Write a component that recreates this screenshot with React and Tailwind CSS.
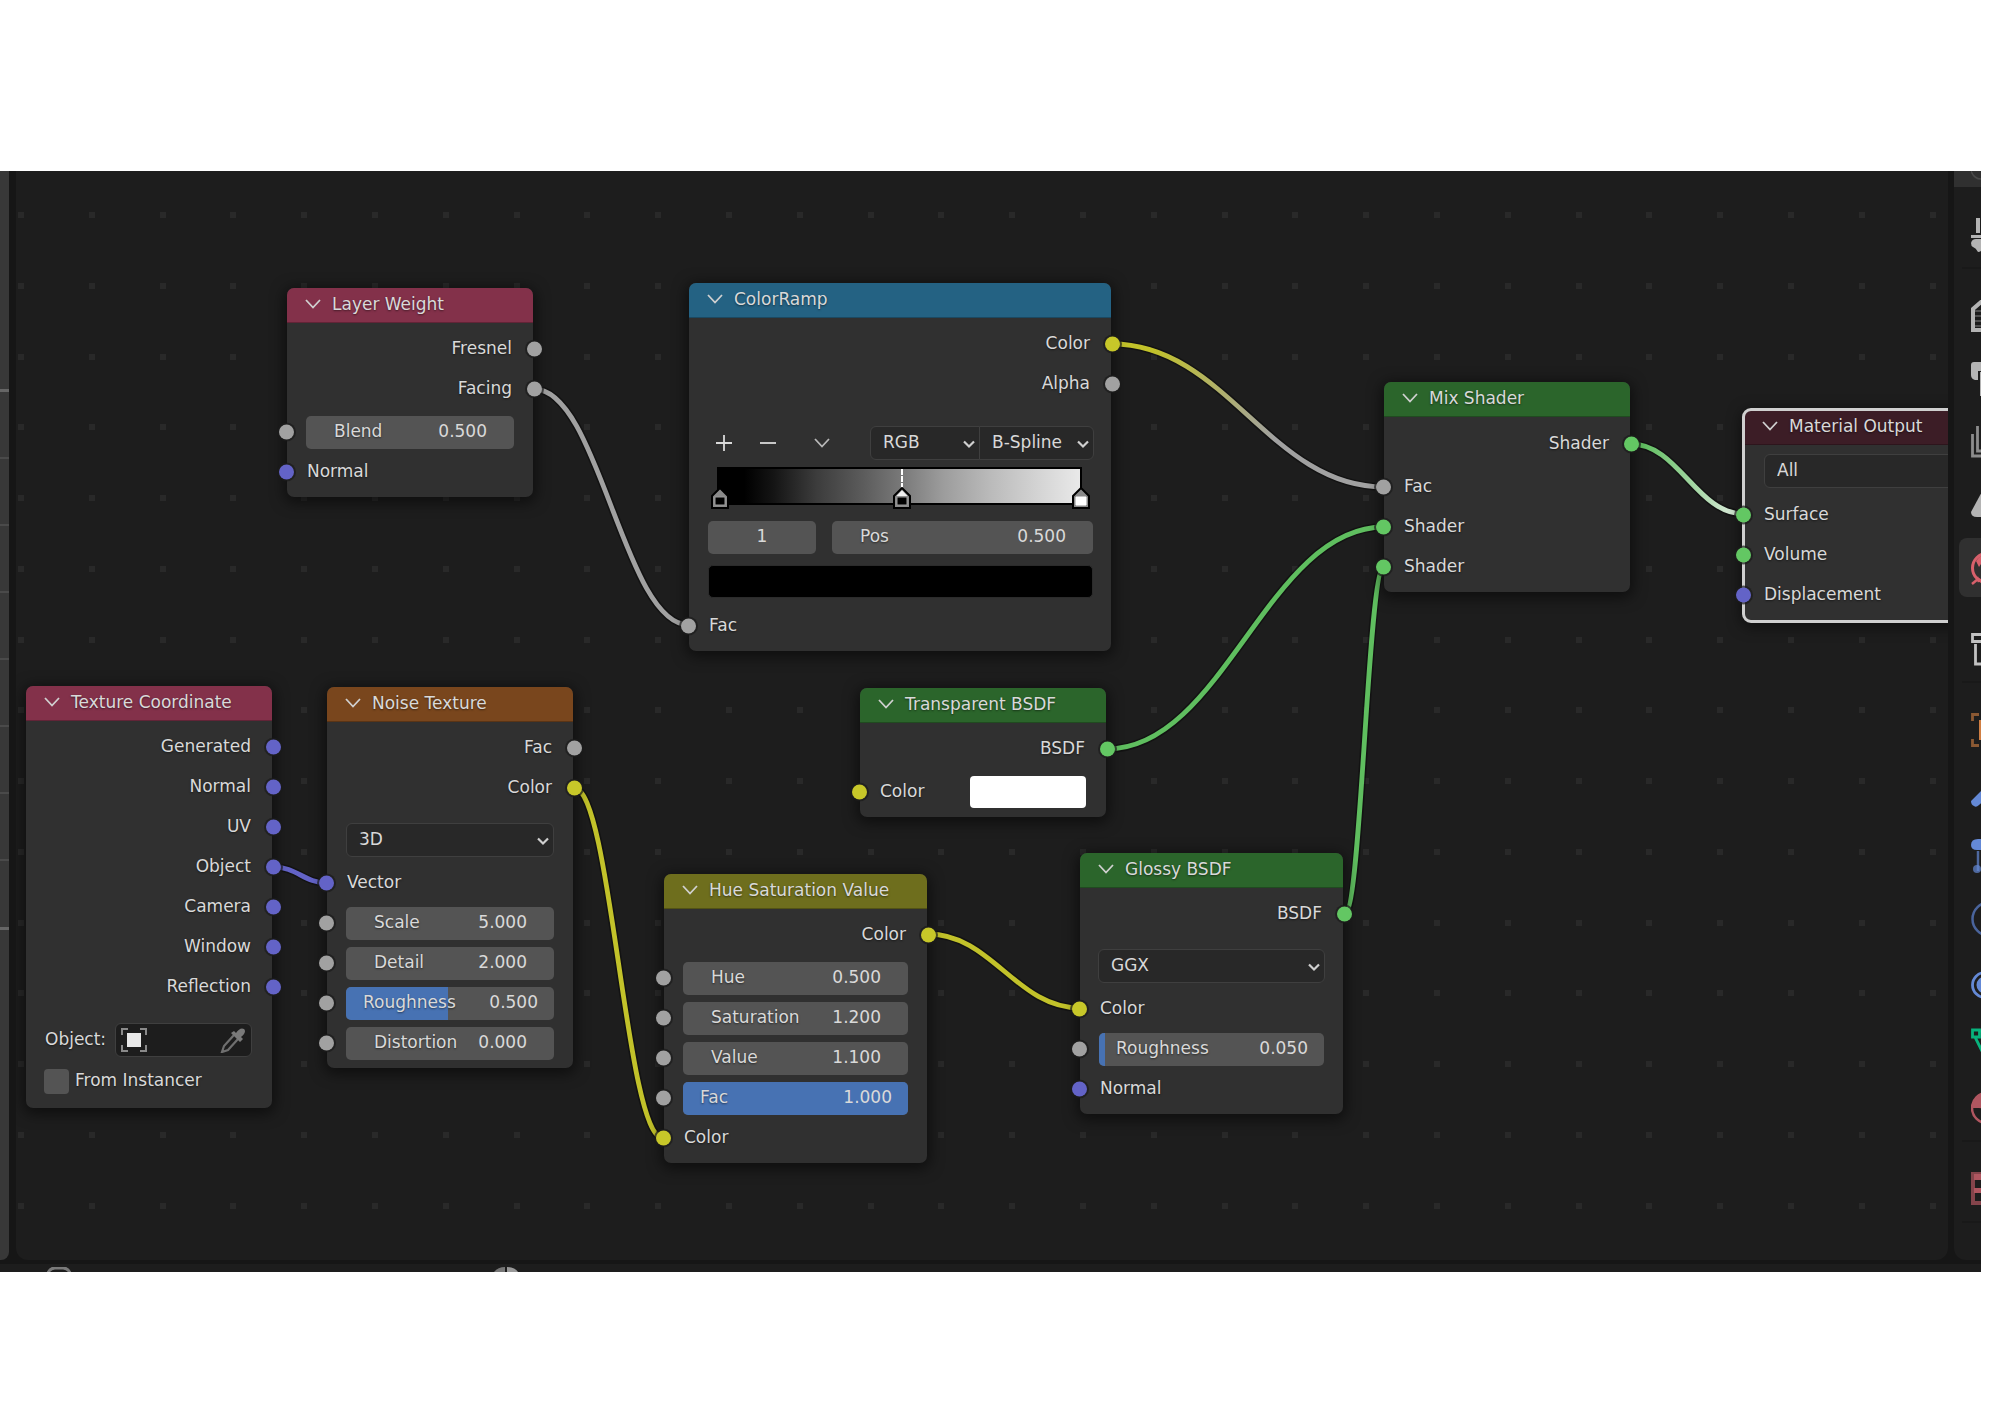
import React from "react";

const SOCKET_COLORS = {
  gray: "bg-[#a1a1a1]",
  yellow: "bg-[#c7c729]",
  green: "bg-[#63c763]",
  purple: "bg-[#6363c7]",
};

function Chevron({ className = "" }) {
  return (
    <svg viewBox="0 0 16 10" className={`h-[10px] w-4 ${className}`} fill="none" stroke="currentColor" strokeWidth="1.8">
      <path d="M1 1l7 7.500l7-7.500" />
    </svg>
  );
}

function SmallChevron({ className = "" }) {
  return (
    <svg
      viewBox="0 0 12 9"
      className={`pointer-events-none absolute top-[14px] h-[9px] w-3 text-[#d0d0d0] ${className}`}
      fill="none"
      stroke="currentColor"
      strokeWidth="2.2"
    >
      <path d="M1 1.500l5 5l5-5" />
    </svg>
  );
}

function Socket({ color, side }) {
  return (
    <span
      className={`absolute top-1/2 size-[15px] -translate-y-1/2 rounded-full ring-2 ring-[#1b1b1b]/70 ${SOCKET_COLORS[color]} ${
        side === "out" ? "-right-[9px]" : "-left-2"
      }`}
    />
  );
}

function Node({ title, header, place, selected = false, children }) {
  return (
    <section
      className={`absolute rounded-[7px] bg-[#303030] shadow-[0_3px_14px_3px_rgba(0,0,0,0.5)] ${place} ${
        selected ? "outline-[3px] -outline-offset-1 outline-[#cfcfcf]" : ""
      }`}
    >
      <header className={`flex h-[35px] items-center gap-[11px] rounded-t-[7px] border-b border-black/25 pb-[3px] pl-[18px] ${header}`}>
        <button type="button" aria-label={`Collapse ${title}`} className="text-[#d0d0d0]">
          <Chevron />
        </button>
        <h2 className="whitespace-nowrap">{title}</h2>
      </header>
      {children}
    </section>
  );
}

function Output({ label, color }) {
  return (
    <div className="relative flex h-10 items-center justify-end pr-[21px] pb-[3px]">
      <span>{label}</span>
      <Socket color={color} side="out" />
    </div>
  );
}

function Input({ label, color, children }) {
  return (
    <div className="relative flex h-10 items-center justify-between pr-5 pb-0.5 pl-5">
      <span>{label}</span>
      {children}
      <Socket color={color} side="in" />
    </div>
  );
}

function NumberField({ label, value, slider, fill = "", className = "" }) {
  return (
    <label
      className={`relative flex h-[33px] items-center overflow-hidden rounded-[5px] bg-[#545454] pb-[3px] ${
        slider ? "pr-4 pl-[17px]" : "pr-[27px] pl-7"
      } ${className}`}
    >
      {slider && <span className={`absolute inset-y-0 left-0 bg-[#4772b3] ${fill}`} />}
      <span className="relative">{label}</span>
      <input defaultValue={value} className="relative w-0 min-w-0 flex-1 bg-transparent text-right outline-none" />
    </label>
  );
}

function FieldInput({ color = "gray", ...field }) {
  return (
    <div className="relative flex h-10 items-center px-[19px]">
      <NumberField {...field} className="flex-1" />
      <Socket color={color} side="in" />
    </div>
  );
}

function Select({ name, options, className = "", chevron = "right-[5px]" }) {
  return (
    <div className={`relative ${className}`}>
      <select
        aria-label={name}
        className="h-[34px] w-full appearance-none rounded-[6px] border border-[#3f3f3f] bg-[#282828] pb-[3px] pl-3 outline-none"
      >
        {options.map((o) => (
          <option key={o}>{o}</option>
        ))}
      </select>
      <SmallChevron className={chevron} />
    </div>
  );
}

function Handle({ place, tip, fill }) {
  return (
    <svg viewBox="0 0 18 22" className={`absolute top-[18px] h-[22px] w-[18px] ${place}`}>
      <path d="M1 9L9 1l8 8v12H1z" fill="#8a8a8a" stroke="#000" strokeWidth="2" />
      <path d="M3.500 9L9 3.200L14.500 9z" fill={tip} />
      <path d="M4 10h10v8H4z" fill={fill} stroke={fill === "#000" ? "#9a9a9a" : "#fff"} strokeWidth="1" />
    </svg>
  );
}

const COLUMNS = Array.from({ length: 28 }, (_, i) => Math.round(18 + i * 70.8));
const ROWS = Array.from({ length: 15 }, (_, i) => Math.round(212 + i * 70.75));

const WIRES = [
  { from: [534, 389], to: [689, 625], color: "#a1a1a1" },
  { from: [1112, 344], to: [1384, 487], color: "url(#wire-value)" },
  { from: [1107, 749], to: [1384, 527], color: "#5fbe5f" },
  { from: [1345, 913], to: [1384, 567], color: "#5fbe5f" },
  { from: [1631, 444], to: [1744, 514], color: "url(#wire-surface)" },
  { from: [274, 867], to: [327, 883], color: "#6363c7" },
  { from: [574, 788], to: [663, 1138], color: "#c2c22a" },
  { from: [928, 934], to: [1080, 1008], color: "#c2c22a" },
];

function wirePath([x1, y1], [x2, y2]) {
  const d = (x2 - x1) * 0.42;
  return `M${x1} ${y1}C${x1 + d} ${y1} ${x2 - d} ${y2} ${x2} ${y2}`;
}

function Backdrop() {
  return (
    <svg className="absolute inset-0 size-full" aria-hidden="true">
      <defs>
        <linearGradient id="wire-value" gradientUnits="userSpaceOnUse" x1="1112" y1="0" x2="1384" y2="0">
          <stop offset="0.15" stopColor="#c2c22a" />
          <stop offset="0.6" stopColor="#a1a1a1" />
        </linearGradient>
        <linearGradient id="wire-surface" gradientUnits="userSpaceOnUse" x1="1631" y1="0" x2="1744" y2="0">
          <stop offset="0.1" stopColor="#5fbe5f" />
          <stop offset="0.85" stopColor="#cfe6cf" />
        </linearGradient>
      </defs>
      <g transform="translate(-16 -171)">
        {ROWS.map((y) =>
          COLUMNS.map((x) => <rect key={`${x}-${y}`} x={x} y={y} width="6" height="6" fill="#292929" />)
        )}
        {WIRES.map((w) => {
          const d = wirePath(w.from, w.to);
          return (
            <g key={d} fill="none">
              <path d={d} stroke="#000" strokeOpacity="0.35" strokeWidth="8" />
              <path d={d} stroke={w.color} strokeWidth="4.800" />
            </g>
          );
        })}
      </g>
    </svg>
  );
}

const TAB_GROUPS = [
  [
    {
      name: "Tool",
      color: "text-[#b4b4b4]",
      art: (
        <>
          <path d="M5 0h4v15H5zM0 17h34v3H0z" fill="currentColor" />
          <path d="M0 25q1-4 5-4h9v7q-2 5-7 6q-2-4-5-5q-2-1-2-4z" fill="currentColor" />
        </>
      ),
    },
  ],
  [
    {
      name: "Render",
      color: "text-[#b4b4b4]",
      art: (
        <>
          <path d="M2 31V10l8-7h22v28z" fill="none" stroke="currentColor" strokeWidth="4" />
          <path d="M4 12h22M4 17h22M4 22h22M4 27h22" stroke="currentColor" strokeWidth="1.500" opacity="0.45" />
        </>
      ),
    },
    {
      name: "Output",
      color: "text-[#b4b4b4]",
      art: <path d="M0 3q0-3 3-3h31v16h-5V9H7v9H4q-4-1-4-5zM9 10h18v24H9z" fill="currentColor" />,
    },
    {
      name: "View Layer",
      color: "text-[#8c8c8c]",
      art: <path d="M1.500 9v22h24M6.500 1v25h24" fill="none" stroke="currentColor" strokeWidth="2.800" />,
    },
    {
      name: "Scene",
      color: "text-[#b4b4b4]",
      art: <path d="M13 0L0 24q0 5 6 5h20q8 0 8-5L21 0z" fill="currentColor" />,
    },
    {
      name: "World",
      color: "text-[#d7606b]",
      active: true,
      art: (
        <>
          <circle cx="16" cy="17" r="14.500" fill="none" stroke="currentColor" strokeWidth="3" />
          <path d="M5 10q4-6 11-7v18l-4-2l-2-6l-2 3z" fill="currentColor" />
          <path d="M1 33l6-5l8 4M6 26l2 5" fill="none" stroke="currentColor" strokeWidth="2.500" />
        </>
      ),
    },
    {
      name: "Collection",
      color: "text-[#c2c2c2]",
      art: <path d="M1.500 2.500h31v7h-31zM4.500 12v20h25V12" fill="none" stroke="currentColor" strokeWidth="2.800" />,
      split: true,
    },
  ],
  [
    {
      name: "Object",
      color: "text-[#a8693a]",
      art: (
        <>
          <path d="M1.500 8V1.500H8M1.500 26v6.500H8" fill="none" stroke="currentColor" strokeWidth="2.800" opacity="0.8" />
          <path d="M8 7h18v20H8z" fill="#d07f43" />
        </>
      ),
    },
    {
      name: "Modifiers",
      color: "text-[#6489d6]",
      art: <path d="M0 25L22 3l8 8L8 29q-3 3-5 1q-3-1-3-5z" fill="currentColor" />,
    },
    {
      name: "Particles",
      color: "text-[#6489d6]",
      art: (
        <>
          <path d="M0 6q0-6 7-6h4v11H6q-6 0-6-5z" fill="currentColor" />
          <path d="M7 12v20" stroke="currentColor" strokeWidth="2.500" opacity="0.7" />
          <circle cx="6" cy="30" r="4" fill="currentColor" opacity="0.7" />
        </>
      ),
    },
    {
      name: "Physics",
      color: "text-[#4a649c]",
      art: <circle cx="18" cy="17" r="16.500" fill="none" stroke="currentColor" strokeWidth="2.500" />,
    },
    {
      name: "Constraints",
      color: "text-[#6489d6]",
      art: (
        <>
          <circle cx="14" cy="20" r="12.500" fill="none" stroke="currentColor" strokeWidth="2.800" />
          <circle cx="14" cy="20" r="8.500" fill="currentColor" />
        </>
      ),
    },
    {
      name: "Data",
      color: "text-[#08b37d]",
      art: <path d="M1.500 2h7v7h-7zM8 3h20M4 9l11 22L28 8" fill="none" stroke="currentColor" strokeWidth="2.800" />,
    },
    {
      name: "Material",
      color: "text-[#b05660]",
      art: (
        <>
          <circle cx="16" cy="17" r="15" fill="none" stroke="currentColor" strokeWidth="2.500" />
          <path d="M1 17Q2 4 16 2v20q-3-5-8-5z" fill="currentColor" />
        </>
      ),
    },
  ],
  [
    {
      name: "Texture",
      color: "text-[#b05660]",
      art: (
        <>
          <path d="M0 0h34v33H0z" fill="currentColor" opacity="0.7" />
          <path d="M4 8h8v8H4zM4 21h8v8H4z" fill="#1d1d1d" />
          <path d="M3 2h9v6H3zM3 16h9v5H3z" fill="currentColor" />
        </>
      ),
    },
  ],
];

function Divider() {
  return <hr className="mt-[3px] mb-[17px] ml-2 border-t-2 border-[#191919]" />;
}

function PropertiesTabs() {
  return (
    <aside className="w-[27px] shrink-0 overflow-hidden rounded-bl-xl bg-[#1d1d1d]">
      <div className="mb-[18px] flex h-4 justify-end bg-[#303030]">
        <svg viewBox="0 0 10 16" className="h-4 w-[10px]" fill="none" stroke="#4a4a4a" strokeWidth="1.500">
          <path d="M0 0q3 8 10 8" />
        </svg>
      </div>
      {TAB_GROUPS.map((group, g) => (
        <div key={g}>
          <div className="flex flex-col gap-1">
            {group.map((tab) => (
              <React.Fragment key={tab.name}>
                {tab.split && <span className="h-[14px]" />}
                <button
                  type="button"
                  aria-label={tab.name}
                  className={`ml-[5px] flex h-[59px] items-center rounded-l-lg pl-3 ${tab.color} ${tab.active ? "bg-[#303030]" : ""}`}
                >
                  <svg viewBox="0 0 34 34" className="size-[34px] shrink-0">
                    {tab.art}
                  </svg>
                </button>
              </React.Fragment>
            ))}
          </div>
          <Divider />
        </div>
      ))}
    </aside>
  );
}

function LeftEditor() {
  return (
    <aside className="w-[9px] shrink-0 rounded-br-lg bg-[#383838]">
      <div className="mt-[218px] h-[3px] bg-[#666666]" />
      <div className="mt-[65px] h-[2px] bg-[#4a4a4a]" />
      {Array.from({ length: 6 }, (_, i) => (
        <div key={i} className="mt-[65px] h-[2px] bg-[#4a4a4a]" />
      ))}
      <div className="mt-[66px] h-[3px] bg-[#666666]" />
    </aside>
  );
}

function StatusBar() {
  return (
    <footer className="flex h-2 shrink-0 items-end bg-[#1d1d1d] pl-[47px]">
      <svg viewBox="0 0 24 5" className="h-[5px] w-6" fill="none" stroke="#7a7a7a" strokeWidth="3">
        <path d="M1 6q2-5 7-5h8q5 0 7 5" />
      </svg>
      <svg viewBox="0 0 24 5" className="ml-[423px] h-[5px] w-6">
        <path d="M0 5q4-5 11-5v5z" fill="#777" />
        <path d="M13 0q8 0 11 5H13z" fill="#999" />
      </svg>
    </footer>
  );
}

export default function App() {
  return (
    <div className="flex h-screen flex-col bg-white pt-[171px] pr-[19px] pb-[142px] font-['DejaVu_Sans','Noto_Sans',sans-serif] text-[17px] leading-5 text-[#d9d9d9] [text-shadow:0_1px_2px_rgba(0,0,0,0.5)]">
      <div className="flex min-h-0 flex-1 flex-col overflow-hidden bg-[#161616]">
        <div className="mb-1 flex min-h-0 flex-1">
          <LeftEditor />
          <main className="relative mx-[7px] mr-[6px] min-w-0 flex-1 overflow-hidden rounded-b-xl bg-[#1d1d1d]">
            <Backdrop />

            <Node title="Layer Weight" header="bg-[#83314a]" place="left-[271px] top-[117px] w-[246px]">
              <div className="pt-[6px] pb-[5px]">
                <Output label="Fresnel" color="gray" />
                <Output label="Facing" color="gray" />
                <div className="h-[3px]" />
                <FieldInput label="Blend" value="0.500" />
                <Input label="Normal" color="purple" />
              </div>
            </Node>

            <Node title="ColorRamp" header="bg-[#246283]" place="left-[673px] top-[112px] w-[422px]">
              <div className="pt-[6px] pb-[5px]">
                <Output label="Color" color="yellow" />
                <Output label="Alpha" color="gray" />
                <div className="mt-[22px] flex h-[34px] items-center pr-[17px] pl-[27px]">
                  <button type="button" aria-label="Add stop">
                    <svg viewBox="0 0 16 16" className="size-4" stroke="#d9d9d9" strokeWidth="1.800">
                      <path d="M8 0v16M0 8h16" />
                    </svg>
                  </button>
                  <button type="button" aria-label="Remove stop" className="ml-7">
                    <svg viewBox="0 0 16 16" className="size-4" stroke="#d9d9d9" strokeWidth="1.800">
                      <path d="M0 8h16" />
                    </svg>
                  </button>
                  <button type="button" aria-label="Color ramp tools" className="ml-[38px] text-[#b8b8b8]">
                    <Chevron />
                  </button>
                  <div className="ml-auto flex">
                    <Select
                      name="Color mode"
                      options={["RGB", "HSV", "HSL"]}
                      className="w-[110px] [&>select]:rounded-r-none"
                      chevron="right-[5px]"
                    />
                    <Select
                      name="Interpolation"
                      options={["B-Spline", "Linear", "Constant"]}
                      className="-ml-px w-[115px] [&>select]:rounded-l-none"
                      chevron="right-[5px]"
                    />
                  </div>
                </div>
                <div className="relative mt-[7px] ml-[28px] mr-[29px] h-[38px] border-2 border-black bg-[linear-gradient(90deg,#000_7%,#141414_15%,#3c3c3c_27%,#5c5c5c_40%,#7d7d7d_52%,#9c9c9c_62%,#bababa_75%,#d3d3d3_88%,#e9e9e9_100%)]">
                  <span className="absolute top-0 left-[182px] h-5 border-l-2 border-dashed border-white" />
                  <Handle place="-left-2" tip="#8a8a8a" fill="#000" />
                  <Handle place="left-[174px]" tip="#f0f0f0" fill="#000" />
                  <Handle place="-right-[10px]" tip="#8a8a8a" fill="#fff" />
                </div>
                <div className="mt-4 flex gap-4 pr-[18px] pl-[19px]">
                  <label className="flex h-[33px] w-[108px] items-center rounded-[5px] bg-[#545454] pb-[3px]">
                    <input aria-label="Active stop" defaultValue="1" className="w-full bg-transparent text-center outline-none" />
                  </label>
                  <NumberField label="Pos" value="0.500" className="flex-1" />
                </div>
                <button
                  type="button"
                  aria-label="Stop color"
                  className="mt-[11px] mr-[18px] mb-2 ml-[19px] block h-[33px] w-[385px] rounded-[5px] border border-[#2b2b2b] bg-black"
                />
                <Input label="Fac" color="gray" />
              </div>
            </Node>

            <Node title="Mix Shader" header="bg-[#2b652b]" place="left-[1368px] top-[211px] w-[246px]">
              <div className="pt-[7px] pb-[5px]">
                <Output label="Shader" color="green" />
                <div className="h-[3px]" />
                <Input label="Fac" color="gray" />
                <Input label="Shader" color="green" />
                <Input label="Shader" color="green" />
              </div>
            </Node>

            <Node title="Material Output" header="bg-[#3c1d26]" selected place="left-[1728px] top-[239px] w-[246px]">
              <div className="pt-[9px] pb-[6px]">
                <Select name="Target" options={["All", "Eevee", "Cycles"]} className="mx-5 mb-[7px]" />
                <Input label="Surface" color="green" />
                <Input label="Volume" color="green" />
                <Input label="Displacement" color="purple" />
              </div>
            </Node>

            <Node title="Texture Coordinate" header="bg-[#83314a]" place="left-[10px] top-[515px] w-[246px]">
              <div className="pt-[6px] pb-[14px]">
                {["Generated", "Normal", "UV", "Object", "Camera", "Window", "Reflection"].map((label) => (
                  <Output key={label} label={label} color="purple" />
                ))}
                <label className="mt-4 flex h-[34px] items-center gap-[9px] pr-5 pl-[19px]">
                  <span className="pb-[3px]">Object:</span>
                  <span className="flex h-full min-w-0 flex-1 items-center rounded-[6px] border border-[#3f3f3f] bg-[#1d1d1d] px-[5px]">
                    <svg viewBox="0 0 26 26" className="size-[26px] shrink-0">
                      <path
                        d="M1 8V2h6M19 2h6v6M25 18v6h-6M7 24H1v-6"
                        fill="none"
                        stroke="#8a8a8a"
                        strokeWidth="2"
                      />
                      <path d="M6 6h14v14H6z" fill="#e8e8e8" />
                    </svg>
                    <input aria-label="Object" className="w-0 min-w-0 flex-1 bg-transparent outline-none" />
                    <svg viewBox="0 0 26 26" className="size-[26px] shrink-0">
                      <path d="M14 8L4 19l-2 6l6-2L18 12" fill="none" stroke="#6f6f6f" strokeWidth="2.200" />
                      <path d="M11 6l3-2l2 2q4-6 8-4q3 3-3 8l2 2l-3 3z" fill="#7a7a7a" />
                    </svg>
                  </span>
                </label>
                <label className="mt-3 flex h-[25px] items-center gap-[6px] pl-[18px]">
                  <input type="checkbox" className="size-[25px] appearance-none rounded-[4px] bg-[#545454] checked:bg-[#4772b3]" />
                  <span className="pb-[3px]">From Instancer</span>
                </label>
              </div>
            </Node>

            <Node title="Noise Texture" header="bg-[#79461d]" place="left-[311px] top-[516px] w-[246px]">
              <div className="pt-[6px] pb-[5px]">
                <Output label="Fac" color="gray" />
                <Output label="Color" color="yellow" />
                <Select name="Dimensions" options={["3D", "1D", "2D", "4D"]} className="mx-[19px] mt-[15px] mb-[6px]" />
                <Input label="Vector" color="purple" />
                <FieldInput label="Scale" value="5.000" />
                <FieldInput label="Detail" value="2.000" />
                <FieldInput label="Roughness" value="0.500" slider fill="w-[49%]" />
                <FieldInput label="Distortion" value="0.000" />
              </div>
            </Node>

            <Node title="Hue Saturation Value" header="bg-[#6e6e1d]" place="left-[648px] top-[703px] w-[263px]">
              <div className="pt-[6px] pb-[5px]">
                <Output label="Color" color="yellow" />
                <div className="h-[3px]" />
                <FieldInput label="Hue" value="0.500" />
                <FieldInput label="Saturation" value="1.200" />
                <FieldInput label="Value" value="1.100" />
                <FieldInput label="Fac" value="1.000" slider fill="w-full" />
                <Input label="Color" color="yellow" />
              </div>
            </Node>

            <Node title="Transparent BSDF" header="bg-[#2b652b]" place="left-[844px] top-[517px] w-[246px]">
              <div className="pt-[6px] pb-[5px]">
                <Output label="BSDF" color="green" />
                <div className="h-[3px]" />
                <div className="relative flex h-10 items-center justify-between px-5">
                  <span className="pb-0.5">Color</span>
                  <button type="button" aria-label="Color" className="h-8 w-[116px] rounded-[4px] bg-white" />
                  <Socket color="yellow" side="in" />
                </div>
              </div>
            </Node>

            <Node title="Glossy BSDF" header="bg-[#2b652b]" place="left-[1064px] top-[682px] w-[263px]">
              <div className="pt-[6px] pb-[5px]">
                <Output label="BSDF" color="green" />
                <Select name="Distribution" options={["GGX", "Beckmann", "Sharp"]} className="mx-[18px] mt-[15px] mb-[6px]" />
                <Input label="Color" color="yellow" />
                <FieldInput label="Roughness" value="0.050" slider fill="w-[6px]" />
                <Input label="Normal" color="purple" />
              </div>
            </Node>
          </main>
          <PropertiesTabs />
        </div>
        <StatusBar />
      </div>
    </div>
  );
}
